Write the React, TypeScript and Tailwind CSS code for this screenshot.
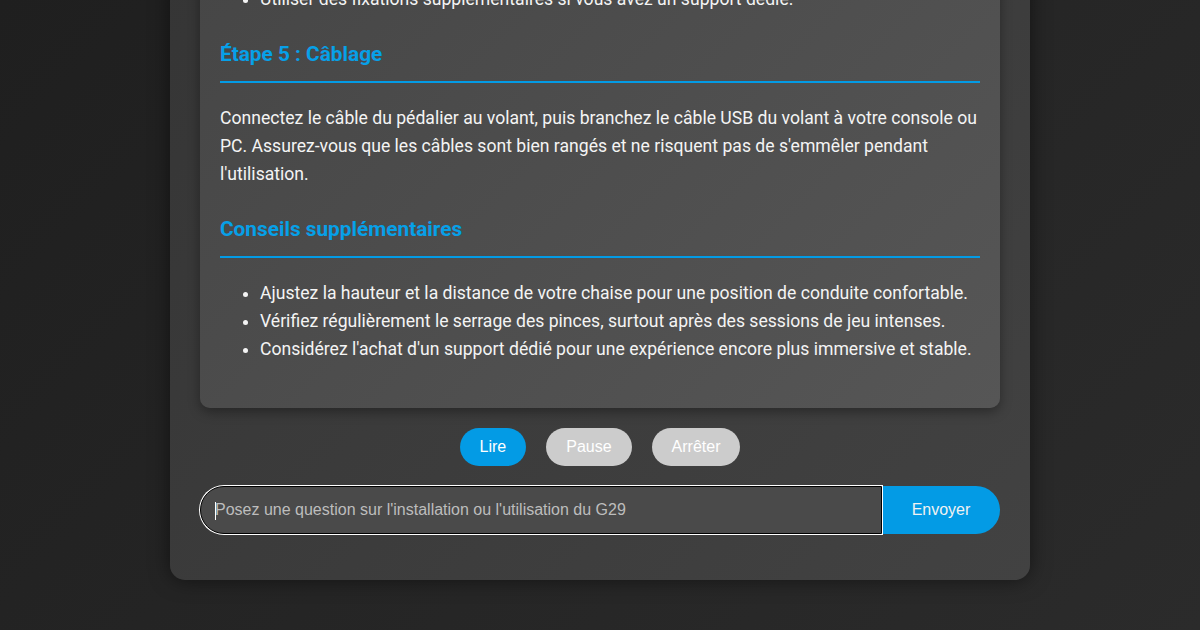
import React from "react";

export default function App() {
  return (
    <div className="h-[630px] w-[1200px] overflow-hidden bg-[linear-gradient(135deg,#1f1f1f,#2b2b2b)] font-['Roboto',sans-serif] text-[#f4f4f4]">
      <div className="mx-auto mt-[-65px] w-[860px] rounded-[15px] bg-[linear-gradient(135deg,#353535,#424242)] px-[30px] pt-[30px] pb-[46px] shadow-[0_0_20px_rgba(0,0,0,0.5)]">
        <div className="rounded-[10px] bg-[linear-gradient(135deg,#464646,#565656)] px-[20px] pt-[20px] pb-[45px] shadow-[0_4px_12px_rgba(0,0,0,0.35)]">
          <ul className="list-disc pl-[40px] text-[17.6px] leading-[28px]">
            <li>Utiliser des fixations supplémentaires si vous avez un support dédié.</li>
          </ul>
          <h2 className="mt-[29px] border-b-2 border-[#039be5] pb-[15px] text-[20.8px] font-bold leading-[24px] text-[#06a0e8]">
            Étape 5 : Câblage
          </h2>
          <p className="mt-[21px] text-[17.6px] leading-[28px]">
            Connectez le câble du pédalier au volant, puis branchez le câble USB du volant à votre console ou PC. Assurez-vous que les câbles sont bien rangés et ne risquent pas de s'emmêler pendant l'utilisation.
          </p>
          <h2 className="mt-[29px] border-b-2 border-[#039be5] pb-[15px] text-[20.8px] font-bold leading-[24px] text-[#06a0e8]">
            Conseils supplémentaires
          </h2>
          <ul className="mt-[21px] list-disc pl-[40px] text-[17.6px] leading-[28px]">
            <li>Ajustez la hauteur et la distance de votre chaise pour une position de conduite confortable.</li>
            <li>Vérifiez régulièrement le serrage des pinces, surtout après des sessions de jeu intenses.</li>
            <li>Considérez l'achat d'un support dédié pour une expérience encore plus immersive et stable.</li>
          </ul>
        </div>

        <div className="mt-[20px] flex justify-center gap-[20px] font-['Liberation_Sans',Arial,sans-serif] text-[16px] leading-[18px]">
          <button className="rounded-full bg-[#039be5] px-[20px] py-[10px] text-white">Lire</button>
          <button className="rounded-full bg-[#cccccc] px-[20px] py-[10px] text-white">Pause</button>
          <button className="rounded-full bg-[#cccccc] px-[20px] py-[10px] text-white">Arrêter</button>
        </div>

        <div className="mt-[20px] flex h-[48px] font-['Liberation_Sans',Arial,sans-serif] text-[16px]">
          <div className="relative flex flex-1 items-center rounded-l-[24px] border border-black bg-[#4a4a4a] shadow-[0_0_0_1px_#ffffff]">
            <span className="absolute left-[14px] top-[15px] h-[18px] w-px bg-white" />
            <input
              className="h-full w-full rounded-l-[24px] bg-transparent pl-[14px] text-[#eeeeee] outline-none placeholder:text-[#bdbdbd]"
              placeholder="Posez une question sur l'installation ou l'utilisation du G29"
            />
          </div>
          <button className="w-[118px] rounded-r-[24px] bg-[#039be5] text-[#f2f2f2]">Envoyer</button>
        </div>
      </div>
    </div>
  );
}
